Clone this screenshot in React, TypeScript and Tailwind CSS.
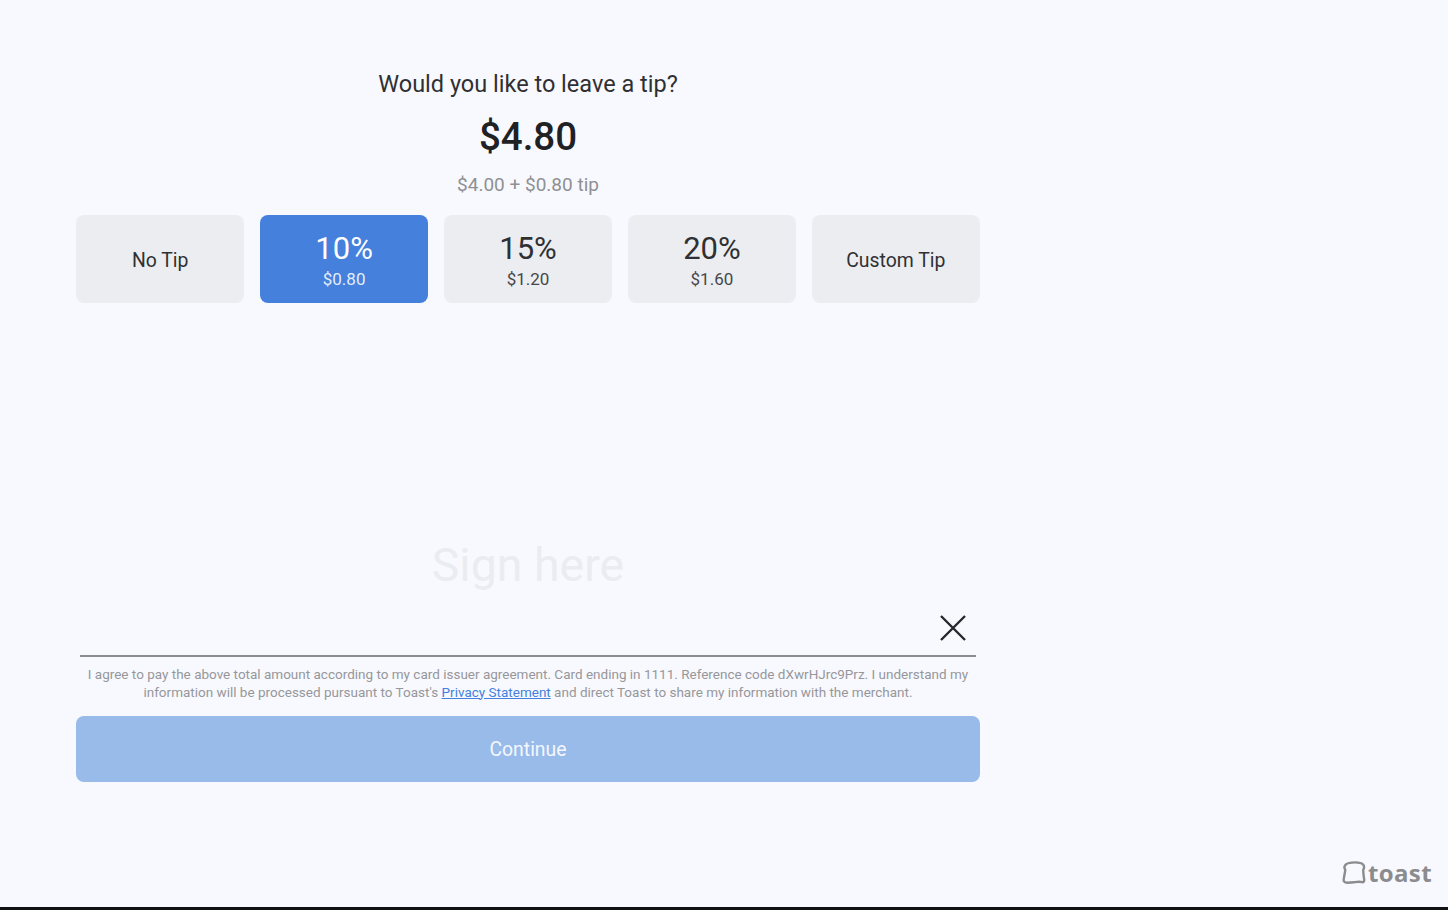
import React from 'react';

const tips = [
  { pct: '10%', amount: '$0.80', selected: true },
  { pct: '15%', amount: '$1.20', selected: false },
  { pct: '20%', amount: '$1.60', selected: false },
];

const ToastLogo = () => (
  <div className="flex items-center gap-[2px] text-[#8b8c8e]">
    <svg width="24" height="24" viewBox="0 0 26 26" fill="none" stroke="currentColor" strokeWidth="2.6" strokeLinejoin="round">
      <path d="M5.5 23.5 C4 23.5 2.5 23 2 22 C1.5 21 2 19 2.5 16 C3 13 3.5 11 3.5 9.5 C2.5 8 2.5 5.5 4 4 C6 2 10 1.5 14 1.5 C18 1.5 21.5 2 23 4 C24 5.5 24 8 23 9.5 C23 12 23.5 17 24 20 C24.2 22 23.5 23 22 23 C19 22 16.5 22.5 13 23 C10 23.5 8 23.5 5.5 23.5 Z" />
    </svg>
    <span className="font-['Open_Sans',sans-serif] text-[24px] font-bold leading-none tracking-[0.4px]">toast</span>
  </div>
);

export default function App() {
  return (
    <div className="flex h-[910px] w-[1448px] flex-col overflow-hidden bg-[#f8f9fe] font-['Roboto',sans-serif]">
      <div className="flex min-h-0 flex-1">
        {/* Tip + signature column */}
        <div className="flex w-[904px] ml-[76px] flex-col">
          <h1 className="mt-[69px] text-center text-[23.5px] leading-[30px] text-[#2f3033]">Would you like to leave a tip?</h1>
          <div className="mt-[15px] text-center text-[38.5px] font-medium leading-[46px] text-[#202124]">$4.80</div>
          <div className="mt-[13px] text-center text-[19px] leading-[24px] text-[#8f9094]">$4.00 + $0.80 tip</div>

          <div className="mt-[18px] flex h-[88px] gap-[15.5px]">
            <button className="flex-1 rounded-[8px] bg-[#ecedf1] pt-[3px] text-[19.4px] text-[#2f3033]">No Tip</button>
            {tips.map((t) => (
              <button
                key={t.pct}
                className={`flex flex-1 flex-col items-center justify-center rounded-[8px] pt-[2px] ${
                  t.selected ? 'bg-[#4480dc] text-white' : 'bg-[#ecedf1] text-[#2f3033]'
                }`}
              >
                <span className="text-[31px] leading-[36px]">{t.pct}</span>
                <span className={`mt-[1px] text-[17px] leading-[22px] ${t.selected ? 'text-[#e3edfb]' : 'text-[#46474a]'}`}>{t.amount}</span>
              </button>
            ))}
            <button className="flex-1 rounded-[8px] bg-[#ecedf1] pt-[3px] text-[19.4px] text-[#2f3033]">Custom Tip</button>
          </div>

          {/* Signature pad */}
          <div className="mt-[233px] text-center text-[46.5px] leading-[58px] text-[#ebecf1]">Sign here</div>
          <div className="mx-[4px] mt-[20px] flex items-center justify-end pr-[9px]">
            <svg width="28" height="28" viewBox="0 0 28 28" stroke="#26272a" strokeWidth="2.4" fill="none">
              <path d="M2 2 L26 26 M26 2 L2 26" />
            </svg>
          </div>
          <div className="mx-[4px] mt-[13px] h-[1.5px] bg-[#8a8b8e]" />

          <p className="mt-[8px] text-center text-[13.5px] leading-[18px] text-[#96979b]">
            I agree to pay the above total amount according to my card issuer agreement. Card ending in 1111. Reference code dXwrHJrc9Prz. I understand my
            <br />
            information will be processed pursuant to Toast's <span className="text-[#4480dc] underline">Privacy Statement</span> and direct Toast to share my information with the merchant.
          </p>

          <button className="mt-[15px] h-[66px] rounded-[8px] bg-[#98bbea] pt-[3px] text-[19.4px] text-[#f4f7fd]">Continue</button>
        </div>

        <div className="flex flex-1 items-end justify-end pb-[22px] pr-[16px]">
          <ToastLogo />
        </div>
      </div>
      <div className="h-[3px] bg-[#111214]" />
    </div>
  );
}
